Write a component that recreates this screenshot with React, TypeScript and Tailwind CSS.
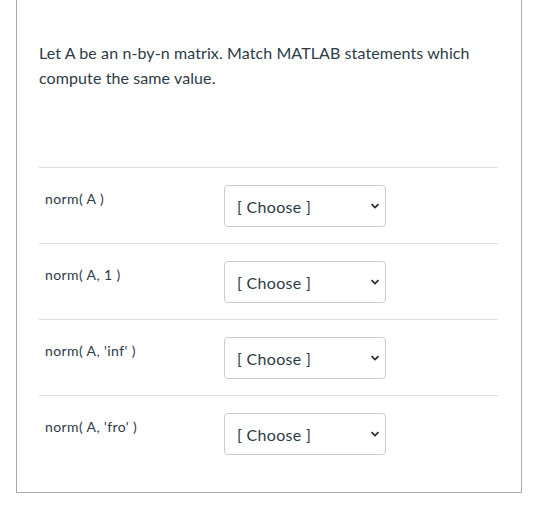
import { FC } from "react";

const rows = ["norm( A )", "norm( A, 1 )", "norm( A, 'inf' )", "norm( A, 'fro' )"];

const Chevron: FC = () => (
  <svg width="10" height="10" viewBox="0 0 10 10" className="shrink-0">
    <path d="M1.5 3.2 L5 6.6 L8.5 3.2" fill="none" stroke="#2d2d2d" strokeWidth="1.8" />
  </svg>
);

const AnswerRow: FC<{ label: string }> = ({ label }) => (
  <div className="flex border-t border-[#dcdcdc] pt-[17px] pb-[16px]">
    <div className="w-[185px] pl-[6px] pt-[4px] text-[14px] leading-[20px] tracking-[0.4px] text-[#2d3b45]">{label}</div>
    <div className="flex h-[42px] w-[162px] items-center justify-between rounded-[4px] border border-[#c7cdd1] pl-[12px] pr-[5px]">
      <span className="pt-[1px] text-[16px] tracking-[0.3px] text-[#2d3b45]">[ Choose ]</span>
      <Chevron />
    </div>
  </div>
);

export default function App() {
  return (
    <div className="h-[505px] w-[535px] bg-white font-['Lato','Liberation_Sans',sans-serif]">
      <div className="ml-[16px] w-[506px] border-x border-b border-[#a9a9a9] pb-[21px]">
        <div className="px-[22px] pt-[40px]">
          <p className="text-[16px] leading-[25px] tracking-[0.1px] text-[#2d3b45]">
            Let A be an n-by-n matrix. Match MATLAB statements which compute the same value.
          </p>
          <div className="mt-[77px] mr-[1px]">
            {rows.map((r) => (
              <AnswerRow key={r} label={r} />
            ))}
          </div>
        </div>
      </div>
    </div>
  );
}
